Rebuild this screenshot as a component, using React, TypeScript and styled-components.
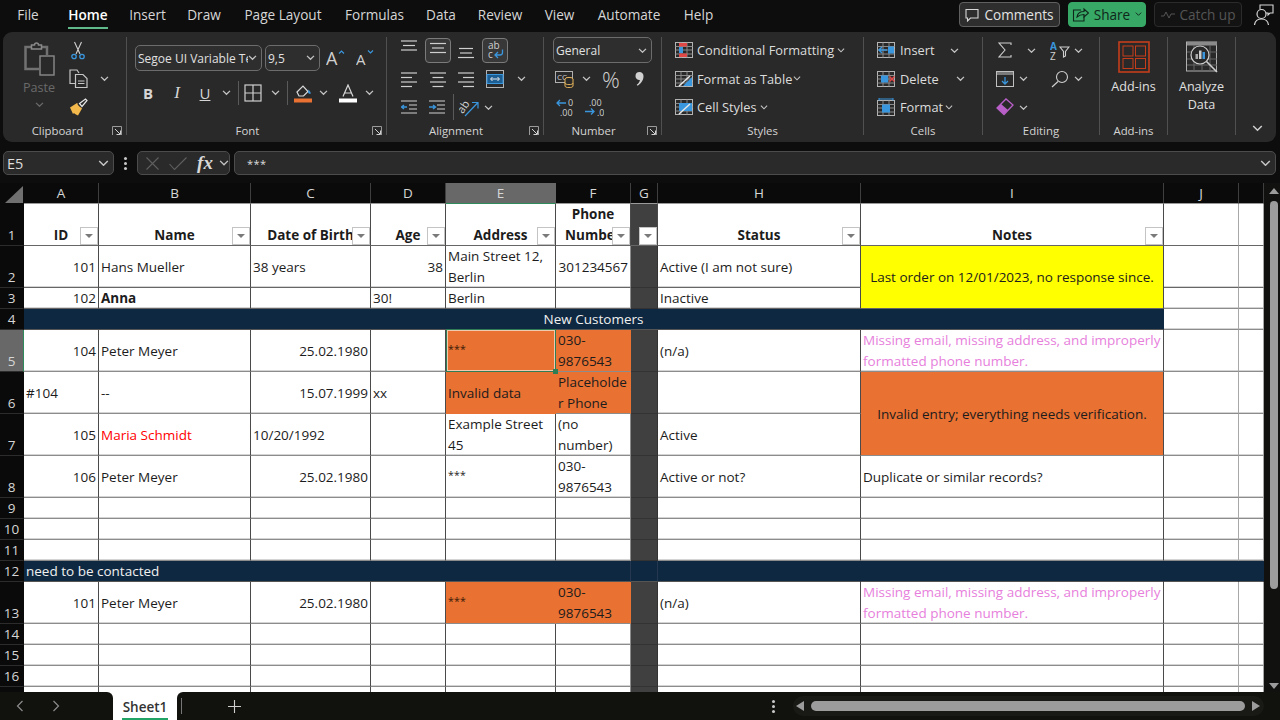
import React from "react";
import styled, { createGlobalStyle } from "styled-components";

const UI_FONT = `"Open Sans", "Noto Sans", "Liberation Sans", sans-serif`;
const GREY = "#c6c6c6";
const BLUE = "#3a96dd";
const ORANGE = "#e97132";
const NAVY = "#0e2841";

const GlobalStyle = createGlobalStyle`
  html, body { margin: 0; padding: 0; background: #0d0d0d; }
  * { box-sizing: border-box; }
`;

const Page = styled.div`
  width: 1280px;
  height: 720px;
  display: flex;
  flex-direction: column;
  overflow: hidden;
  background: #0d0d0d;
  font-family: ${UI_FONT};
`;

/* ---------- top menu ---------- */
const MenuBar = styled.div`
  height: 32px;
  flex: none;
  display: flex;
  align-items: flex-start;
  padding-left: 17px;
`;
const MenuTabs = styled.div`
  display: flex;
  gap: 22px;
`;
const MenuTab = styled.div<{ $w: number; $active?: boolean; $after?: number }>`
  width: ${(p) => p.$w}px;
  height: 29px;
  margin-right: ${(p) => p.$after || 0}px;
  display: flex;
  justify-content: center;
  padding-top: 5px;
  white-space: nowrap;
  font-size: 13.6px;
  line-height: 20px;
  font-weight: ${(p) => (p.$active ? 600 : 400)};
  color: ${(p) => (p.$active ? "#fff" : "#d6d6d6")};
  border-bottom: ${(p) => (p.$active ? "2.5px solid #5fb98a" : "none")};
`;
const MenuActions = styled.div`
  margin-left: auto;
  padding: 2px 3px 0 0;
  display: flex;
  align-items: center;
`;
const ActionButton = styled.div<{ $w: number; $kind: "plain" | "share" | "off"; $after: number }>`
  width: ${(p) => p.$w}px;
  height: 25px;
  margin-right: ${(p) => p.$after}px;
  display: flex;
  align-items: center;
  justify-content: center;
  gap: 5px;
  border-radius: 4px;
  font-size: 13.6px;
  white-space: nowrap;
  background: ${(p) => (p.$kind === "share" ? "#37a866" : p.$kind === "plain" ? "#2e2e2e" : "#131313")};
  color: ${(p) => (p.$kind === "share" ? "#10261a" : p.$kind === "plain" ? "#e2e2e2" : "#555")};
  border: 1px solid ${(p) => (p.$kind === "share" ? "#37a866" : p.$kind === "plain" ? "#606060" : "#2b2b2b")};
`;

/* ---------- ribbon ---------- */
const Ribbon = styled.div`
  height: 110px;
  flex: none;
  margin: 0 4px 0 3px;
  padding: 4px 0 2px;
  display: flex;
  border-radius: 9px;
  background: #292929;
  color: #d8d8d8;
  font-size: 12.6px;
`;
const Group = styled.div<{ $w: number }>`
  width: ${(p) => p.$w}px;
  flex: none;
  position: relative;
  display: flex;
  flex-direction: column;
`;
const GroupBody = styled.div<{ $pad?: number }>`
  height: 86px;
  padding-left: ${(p) => p.$pad || 0}px;
`;
const GroupLabel = styled.div<{ $inset?: number }>`
  height: 18px;
  padding-right: ${(p) => p.$inset || 0}px;
  text-align: center;
  font-size: 11.4px;
  line-height: 18px;
  color: #d4d4d4;
`;
const Launcher = styled.div`
  position: absolute;
  right: 4px;
  bottom: 4px;
  width: 10px;
  height: 10px;
`;
const GroupSep = styled.div`
  width: 1px;
  flex: none;
  margin: 1px 0 5px;
  background: #505050;
`;
const Row = styled.div<{ $h?: number; $pad?: number }>`
  height: ${(p) => p.$h || 28.6}px;
  padding-left: ${(p) => p.$pad || 0}px;
  display: flex;
  align-items: center;
`;
const Slot = styled.div<{ $w: number }>`
  width: ${(p) => p.$w}px;
  flex: none;
  height: 100%;
  display: flex;
  align-items: center;
  justify-content: center;
`;
const ToggledBox = styled.div`
  width: 26px;
  height: 25px;
  flex: none;
  display: flex;
  align-items: center;
  justify-content: center;
  border-radius: 4px;
  border: 1px solid #7b7b7b;
  background: #383838;
`;
const VSep = styled.div<{ $h: number }>`
  width: 1px;
  height: ${(p) => p.$h}px;
  flex: none;
  background: #5a5a5a;
`;
const SelectBox = styled.div<{ $w: number; $after?: number }>`
  width: ${(p) => p.$w}px;
  height: 26px;
  flex: none;
  margin-right: ${(p) => p.$after || 0}px;
  padding: 0 4px 0 2px;
  display: flex;
  align-items: center;
  justify-content: space-between;
  border: 1px solid #6c6c6c;
  border-radius: 5px;
  background: #2e2e2e;
  font-size: 12px;
  color: #e0e0e0;
  white-space: nowrap;
`;
const SelectText = styled.span`
  overflow: hidden;
  flex: 1;
`;
const PasteCol = styled.div`
  width: 63px;
  padding: 6px 0 0 9px;
  display: flex;
  flex-direction: column;
  align-items: center;
  flex: none;
`;
const PasteText = styled.div`
  margin: 4px 0 6px;
  font-size: 12.6px;
  line-height: 16px;
  color: #6a6a6a;
`;
const ClipboardBody = styled(GroupBody)`
  display: flex;
`;
const StyleLabel = styled.span<{ $w: number; $gap?: number }>`
  margin-left: ${(p) => p.$gap || 5}px;
  white-space: nowrap;
  font-size: 12.8px;
  width: ${(p) => p.$w}px;
  flex: none;
  color: #dcdcdc;
`;
const BigButton = styled.div`
  padding-top: 5px;
  display: flex;
  flex-direction: column;
  align-items: center;
  text-align: center;
  font-size: 12.6px;
  line-height: 18px;
  color: #e0e0e0;
  white-space: pre-line;
`;
const BigCaption = styled.div`
  margin-top: 5px;
`;
const RibbonEnd = styled.div`
  flex: 1;
  display: flex;
  align-items: flex-end;
  justify-content: center;
  padding: 0 0 8px 3px;
`;

/* ---------- formula bar ---------- */
const FormulaBar = styled.div`
  height: 24px;
  flex: none;
  margin: 9px 4px 0 3px;
  display: flex;
  align-items: stretch;
`;
const FormulaBox = styled.div<{ $w?: number; $after?: number }>`
  ${(p) => (p.$w ? `width: ${p.$w}px; flex: none;` : "flex: 1;")}
  margin-right: ${(p) => p.$after || 0}px;
  display: flex;
  align-items: center;
  border: 1px solid #4c4c4c;
  border-radius: 5px;
  background: #2a2a2a;
  color: #dedede;
  font-size: 14.5px;
`;
const NameText = styled.span`
  flex: 1;
  padding-left: 3px;
`;
const FormulaText = styled.span`
  flex: 1;
  padding-left: 12px;
  letter-spacing: 0.5px;
  font-size: 11px;
`;
const DotsGap = styled.div`
  width: 23px;
  flex: none;
  display: flex;
  align-items: center;
  justify-content: center;
`;
const FxSlot = styled(Slot)`
  font-family: "Liberation Serif", serif;
  font-style: italic;
  font-weight: 700;
  font-size: 19px;
  color: #d8d8d8;
`;

/* ---------- sheet ---------- */
const columns = [24, 75, 152, 120, 75, 110, 75, 27, 203, 303, 75, 25];
const rowHeights = [42, 42, 21, 21, 42, 42, 42, 42, 21, 21, 21, 21, 42, 21, 21, 21, 21];

const SheetArea = styled.div`
  flex: 1;
  min-height: 0;
  margin-top: 8px;
  display: flex;
  overflow: hidden;
`;
const SheetGrid = styled.div`
  width: 1264px;
  flex: none;
  display: grid;
  grid-template-columns: ${columns.map((c) => `${c}px`).join(" ")};
  grid-template-rows: 21px ${rowHeights.map((h) => `${h}px`).join(" ")};
  font-size: 13.5px;
  color: #1c1c1c;
`;
const Corner = styled.div`
  background: #0a0a0a;
  position: relative;
  &::after {
    content: "";
    position: absolute;
    left: 5px;
    right: 1px;
    top: 3px;
    bottom: 1px;
    background: #707070;
    clip-path: polygon(100% 0, 100% 100%, 0 100%);
  }
`;
const ColHead = styled.div<{ $sel?: boolean }>`
  display: flex;
  align-items: center;
  justify-content: center;
  font-size: 13.5px;
  color: #d6d6d6;
  background: ${(p) => (p.$sel ? "#686868" : "#0a0a0a")};
  border-right: 1px solid ${(p) => (p.$sel ? "#686868" : "#3f3f3f")};
  border-bottom: 1px solid ${(p) => (p.$sel ? "#2f8a5c" : "#9a9a9a")};
`;
const RowHead = styled.div<{ $sel?: boolean }>`
  display: flex;
  align-items: flex-end;
  justify-content: center;
  font-size: 13.5px;
  line-height: 20px;
  color: #d6d6d6;
  background: ${(p) => (p.$sel ? "#686868" : "#0a0a0a")};
  border-right: 1px solid ${(p) => (p.$sel ? "#2f8a5c" : "#0a0a0a")};
  border-bottom: 1px solid #2c2c2c;
`;

type CellProps = {
  $span?: number;
  $rows?: number;
  $align?: "left" | "right" | "center";
  $bg?: string;
  $color?: string;
  $bold?: boolean;
  $v?: string;
  $h?: string;
  $head?: boolean;
};
const Cell = styled.div<CellProps>`
  grid-column: span ${(p) => p.$span || 1};
  grid-row: span ${(p) => p.$rows || 1};
  position: relative;
  overflow: hidden;
  display: flex;
  align-items: ${(p) => (p.$head ? "flex-end" : "center")};
  justify-content: ${(p) =>
    p.$align === "right" ? "flex-end" : p.$align === "center" ? "center" : "flex-start"};
  padding: ${(p) => (p.$head ? 0 : 1)}px 2px 0 2px;
  white-space: pre-line;
  line-height: 21px;
  text-align: ${(p) => p.$align || "left"};
  font-weight: ${(p) => (p.$bold ? 700 : 400)};
  color: ${(p) => p.$color || "#1c1c1c"};
  background: ${(p) => p.$bg || "#fff"};
  border-right: 1px solid ${(p) => p.$v || "#4a4a4a"};
  border-bottom: 1px solid ${(p) => p.$h || "#8c8c8c"};
  box-shadow: ${(p) => (p.$bg || p.$head ? "none" : "inset 0 -1px 0 #d4d4d4")};
`;
const HeadText = styled.span`
  position: relative;
  top: 1px;
`;
const Stars = styled.span`
  font-size: 10.5px;
  letter-spacing: 0.2px;
  position: relative;
  top: -2px;
`;
const FilterButton = styled.div`
  position: absolute;
  right: 0;
  bottom: 0;
  width: 18px;
  height: 18px;
  display: flex;
  align-items: center;
  justify-content: center;
  background: #fff;
  border: 1px solid #c4c4c4;
  &::after {
    content: "";
    border-left: 4px solid transparent;
    border-right: 4px solid transparent;
    border-top: 4px solid #7a7a7a;
  }
`;
const Selection = styled.div`
  position: absolute;
  inset: -1px -1px -1px 0;
  border: 1.5px solid #2f7d55;
  box-shadow: inset 0 0 0 1px #f0c9ae;
`;
const SelectionHandle = styled.div`
  position: absolute;
  right: -3px;
  bottom: -3px;
  width: 5px;
  height: 5px;
  background: #2f7d55;
  z-index: 2;
`;
const EditedCell = styled(Cell)`
  overflow: visible;
  z-index: 1;
`;

const VScroll = styled.div`
  flex: 1;
  display: flex;
  flex-direction: column;
  align-items: center;
  padding: 5px 0 3px 4px;
  background: #111210;
`;
const Thumb = styled.div`
  width: 8px;
  height: 388px;
  margin-top: 7px;
  border-radius: 4px;
  background: #9c9c9c;
`;
const ArrowUp = styled.div`
  border-left: 5px solid transparent;
  border-right: 5px solid transparent;
  border-bottom: 6px solid #9c9c9c;
`;
const ArrowDown = styled.div`
  margin-top: auto;
  border-left: 5px solid transparent;
  border-right: 5px solid transparent;
  border-top: 6px solid #9c9c9c;
`;

/* ---------- bottom bar ---------- */
const BottomBar = styled.div`
  height: 28px;
  flex: none;
  display: flex;
  background: #fff;
`;
const NavZone = styled.div`
  width: 113px;
  flex: none;
  display: flex;
  align-items: center;
  padding-left: 2px;
  background: #11120e;
  border-top-right-radius: 6px;
`;
const SheetTab = styled.div`
  width: 64px;
  flex: none;
  display: flex;
  flex-direction: column;
  align-items: center;
  padding-top: 4px;
  font-size: 13.5px;
  line-height: 22px;
  font-weight: 600;
  color: #333;
  background: #fff;
`;
const TabUnderline = styled.div`
  width: 46px;
  height: 2px;
  background: #21a366;
`;
const RightZone = styled.div`
  flex: 1;
  display: flex;
  align-items: center;
  padding-left: 4px;
  background: #11120e;
  border-top-left-radius: 6px;
`;
const ThinBar = styled.div`
  width: 1px;
  height: 16px;
  background: #777;
  flex: none;
`;
const HTrack = styled.div`
  width: 471px;
  height: 20px;
  margin-left: 10px;
  flex: none;
  display: flex;
  align-items: center;
  border-radius: 10px;
  background: #191a16;
`;
const HThumb = styled.div`
  width: 434px;
  height: 10px;
  margin-left: 4px;
  flex: none;
  border-radius: 5px;
  background: #9c9c9c;
`;
const TrackEnd = styled.div`
  margin-left: auto;
  margin-right: 4px;
`;
const Dots = styled.div`
  width: 3px;
  height: 3px;
  flex: none;
  border-radius: 50%;
  color: #c8c8c8;
  background: currentColor;
  box-shadow: 0 -5px 0 currentColor, 0 5px 0 currentColor;
`;

/* ---------- icons ---------- */
const Ic = ({ w, h, children }: { w: number; h: number; children: React.ReactNode }) => (
  <svg width={w} height={h} viewBox={`0 0 ${w} ${h}`} fill="none" style={{ display: "block", flex: "none" }}>
    {children}
  </svg>
);

const Chevron = ({ color = GREY, size = 9 }: { color?: string; size?: number }) => (
  <svg width={size} height={size * 0.6} viewBox="0 0 9 5.4" fill="none" style={{ display: "block", flex: "none" }}>
    <path d="M1 .8l3.5 3.5L8 .8" stroke={color} strokeWidth="1.2" />
  </svg>
);

const LauncherIcon = () => (
  <Launcher>
    <Ic w={10} h={10}>
      <path d="M.5 9V.5H9.5V9" stroke="#9a9a9a" />
      <path d="M3 3l5 5M8.5 4.5v4h-4" stroke="#d0d0d0" />
    </Ic>
  </Launcher>
);

const PasteIcon = () => (
  <Ic w={31} h={34}>
    <path d="M15 27H1.5V5H7M17 5h6v8" stroke="#717171" strokeWidth="2.5" />
    <path d="M7.5 6V3h3a2 2 0 0 1 4 0h3v4h-10z" stroke="#8a8a8a" strokeWidth="1.5" />
    <rect x="16" y="14" width="14" height="19" stroke="#8a8a8a" strokeWidth="1.4" fill="#292929" />
  </Ic>
);
const ScissorsIcon = () => (
  <Ic w={14} h={19}>
    <path d="M3.5 1l5.500 12M10.500 1L5 13" stroke="#cfcfcf" strokeWidth="1.1" />
    <circle cx="3" cy="15.5" r="2.2" stroke={BLUE} strokeWidth="1.3" />
    <circle cx="11" cy="15.5" r="2.2" stroke={BLUE} strokeWidth="1.3" />
  </Ic>
);
const CopyIcon = () => (
  <Ic w={19} h={19}>
    <path d="M8 14.5H1V1h7l2 3" stroke={GREY} strokeWidth="1.2" />
    <path d="M6.5 5.5H14l4 4v9H6.5z" stroke={GREY} strokeWidth="1.2" fill="#292929" />
    <path d="M9 12h6.5M9 14.5h6.5" stroke={GREY} />
  </Ic>
);
const BrushIcon = () => (
  <Ic w={19} h={18}>
    <path d="M1 9.5L8 5l5 5.500-4 7-3-1.500-1-1-1 1z" fill="#f2b84b" />
    <path d="M9 6l3 3" stroke="#292929" strokeWidth="1.5" />
    <path d="M10.5 5.5l6-4.500 1.500 1.500-5 6z" stroke="#e6e6e6" strokeWidth="1.2" />
  </Ic>
);
const GrowA = ({ up }: { up: boolean }) => (
  <Ic w={20} h={18}>
    <text x="0" y="16" fontFamily={UI_FONT} fontSize={up ? 18 : 15} fill="#d0d0d0">A</text>
    <path d={up ? "M13 4.5l2.500-2.500L18 4.5" : "M12 1.5l2.500 2.500L17 1.5"} stroke={BLUE} strokeWidth="1.2" />
  </Ic>
);
const LetterIcon = styled.span<{ $b?: boolean; $i?: boolean; $u?: boolean }>`
  font-family: ${(p) => (p.$i ? `"Liberation Serif", serif` : UI_FONT)};
  font-size: ${(p) => (p.$i ? 17 : 15)}px;
  color: #d6d6d6;
  font-weight: ${(p) => (p.$b ? 700 : 400)};
  font-style: ${(p) => (p.$i ? "italic" : "normal")};
  text-decoration: ${(p) => (p.$u ? "underline" : "none")};
`;
const BordersIcon = () => (
  <Ic w={18} h={18}>
    <rect x="1" y="1" width="16" height="16" stroke="#cfcfcf" strokeWidth="1.2" />
    <path d="M9 1v16M1 9h16" stroke="#cfcfcf" strokeWidth="1.2" />
  </Ic>
);
const FillIcon = () => (
  <Ic w={19} h={19}>
    <path d="M3 8l6-6 5 5.500-4.500 4.500H5z" stroke="#d8d8d8" strokeWidth="1.2" />
    <path d="M14.5 5.5c1.500 1.500 2.500 3 2 4.500-1.500 0-2.500-1-2.500-2z" fill={BLUE} />
    <rect x="0" y="14.5" width="18" height="4" fill={ORANGE} />
  </Ic>
);
const FontColorIcon = () => (
  <Ic w={18} h={19}>
    <path d="M4 12.5L9 1l5 11.500M5.500 9h7" stroke="#d8d8d8" strokeWidth="1.2" />
    <rect x="0" y="14.5" width="18" height="4" fill="#fff" />
  </Ic>
);
const LinesIcon = ({ rows, w = 16, h = 28 }: { rows: [number, number, number][]; w?: number; h?: number }) => (
  <Ic w={w} h={h}>
    {rows.map(([x1, x2, y], i) => (
      <path key={i} d={`M${x1} ${y}H${x2}`} stroke="#cfcfcf" strokeWidth="1.2" />
    ))}
  </Ic>
);
const WrapIcon = () => (
  <Ic w={20} h={22}>
    <text x="3" y="9.5" fontFamily={UI_FONT} fontSize="10" fill="#d0d0d0">ab</text>
    <text x="3" y="19" fontFamily={UI_FONT} fontSize="10" fill="#d0d0d0">c</text>
    <path d="M17.5 10.5v3a2.500 2.500 0 0 1-2.500 2.500H10M13 13l-3 3 3 3" stroke={BLUE} strokeWidth="1.3" />
  </Ic>
);
const MergeIcon = () => (
  <Ic w={18} h={18}>
    <rect x=".5" y=".5" width="17" height="17" stroke="#b4b4b4" />
    <rect x="1" y="4.5" width="16" height="9" fill="#1c5d92" stroke={BLUE} />
    <path d="M5 9h8M6.500 7L4.500 9l2 2M11.500 7l2 2-2 2" stroke="#eaeaea" />
  </Ic>
);
const IndentIcon = ({ flip }: { flip?: boolean }) => (
  <Ic w={16} h={16}>
    <path d="M0 2h16M8 6h8M8 10h8M0 14h16" stroke="#cfcfcf" strokeWidth="1.2" />
    <path d={flip ? "M0 8h6M4 6l2.500 2L4 10" : "M6 8H.5M3 6L.5 8 3 10"} stroke={BLUE} strokeWidth="1.4" />
  </Ic>
);
const OrientIcon = () => (
  <Ic w={20} h={20}>
    <text x="0" y="14" fontFamily={UI_FONT} fontSize="11" fill="#d0d0d0" transform="rotate(-55 5 12)">ab</text>
    <path d="M6 19L18.5 6M13 5.500h6v6" stroke={BLUE} strokeWidth="1.2" />
  </Ic>
);
const CurrencyIcon = () => (
  <Ic w={20} h={18}>
    <rect x=".5" y="1.5" width="17" height="11" stroke="#b0b0b0" />
    <text x="2" y="10" fontFamily={UI_FONT} fontSize="8" fill="#d0d0d0">CC</text>
    <ellipse cx="14" cy="9" rx="4" ry="1.6" fill="#292929" stroke="#e8b55a" />
    <path d="M10 9v7c0 1 1.800 1.600 4 1.600s4-.6 4-1.600V9M10 13c0 1 1.800 1.600 4 1.600s4-.6 4-1.600" stroke="#e8b55a" fill="#292929" />
  </Ic>
);
const PercentText = styled.span`
  font-size: 22px;
  color: #d0d0d0;
  font-weight: 300;
`;
const CommaIcon = () => (
  <Ic w={9} h={14}>
    <path d="M4.500 0a4 4 0 0 1 4 4.200c0 4-2.700 7.500-6 9.500l-.8-1c2-1.500 3-3.200 3.200-4.800A3.800 3.800 0 0 1 .5 4a4 4 0 0 1 4-4z" fill="#d0d0d0" />
  </Ic>
);
const DecimalIcon = ({ more }: { more?: boolean }) => (
  <Ic w={19} h={19}>
    {more ? (
      <>
        <text x="4" y="8" fontFamily={UI_FONT} fontSize="9" fill="#d0d0d0">.00</text>
        <text x="12" y="17.5" fontFamily={UI_FONT} fontSize="9" fill="#d0d0d0">.0</text>
        <path d="M0 13.5h9M6 10.500l3 3-3 3" stroke={BLUE} strokeWidth="1.3" />
      </>
    ) : (
      <>
        <text x="12" y="8" fontFamily={UI_FONT} fontSize="9" fill="#d0d0d0">0</text>
        <text x="4" y="17.5" fontFamily={UI_FONT} fontSize="9" fill="#d0d0d0">.00</text>
        <path d="M10 5H1M4 2L1 5l3 3" stroke={BLUE} strokeWidth="1.3" />
      </>
    )}
  </Ic>
);
const GridBase = () => (
  <>
    <rect x=".5" y=".5" width="17" height="15" stroke="#b4b4b4" />
    <path d="M.5 4.500h17M.5 8h17M.5 12h17M6 .5v15M12 .5v15" stroke="#8a8a8a" />
  </>
);
const CondIcon = () => (
  <Ic w={18} h={16}>
    <GridBase />
    <rect x="4" y="1" width="8" height="3.500" fill="#e04848" />
    <rect x="4" y="5" width="4" height="6" fill={BLUE} />
    <rect x="4" y="11.500" width="8" height="3.500" fill="#e04848" />
  </Ic>
);
const TableIcon = () => (
  <Ic w={18} h={16}>
    <GridBase />
    <path d="M8 15l9-9v9z" fill={BLUE} />
    <path d="M4 15L15 5" stroke="#e6e6e6" strokeWidth="1.5" />
  </Ic>
);
const CellStyleIcon = () => (
  <Ic w={18} h={16}>
    <GridBase />
    <rect x="4" y="4" width="13" height="8" fill={BLUE} />
    <path d="M4 15L15 5" stroke="#e6e6e6" strokeWidth="1.5" />
  </Ic>
);
const InsertIcon = () => (
  <Ic w={18} h={16}>
    <GridBase />
    <rect x="11" y="4.500" width="6" height="7" fill={BLUE} />
    <path d="M10 8H2M5 5L2 8l3 3" stroke={BLUE} strokeWidth="1.5" />
  </Ic>
);
const DeleteIcon = () => (
  <Ic w={18} h={16}>
    <GridBase />
    <rect x="4" y="4.500" width="7" height="7" fill={BLUE} />
    <path d="M12.500 5.500l5 5M17.500 5.500l-5 5" stroke="#e04848" strokeWidth="1.5" />
  </Ic>
);
const FormatIcon = () => (
  <Ic w={18} h={18}>
    <g transform="translate(0 2)">
      <GridBase />
      <rect x="5" y="4.500" width="8" height="8" fill={BLUE} />
    </g>
    <path d="M2 1h14M2 0v2.500M16 0v2.500" stroke={BLUE} />
  </Ic>
);
const SigmaIcon = () => (
  <Ic w={14} h={16}>
    <path d="M13 3V1H1l6 7-6 7h12v-2" stroke="#cfcfcf" strokeWidth="1.1" />
  </Ic>
);
const SortIcon = () => (
  <Ic w={20} h={19}>
    <text x="0" y="8.500" fontFamily={UI_FONT} fontWeight="700" fontSize="10" fill={BLUE}>A</text>
    <text x="0" y="18.500" fontFamily={UI_FONT} fontSize="10" fill="#d0d0d0">Z</text>
    <path d="M10 6h9l-3.500 4.500V15l-2 1v-5.500z" stroke="#d0d0d0" strokeWidth="1.1" />
  </Ic>
);
const FillDownIcon = () => (
  <Ic w={18} h={16}>
    <rect x=".5" y=".5" width="17" height="15" stroke="#c0c0c0" />
    <rect x="1" y="1" width="16" height="3" fill="#7a7a7a" />
    <path d="M9 6v7M6 10l3 3 3-3" stroke={BLUE} strokeWidth="1.3" />
  </Ic>
);
const SearchIcon = () => (
  <Ic w={18} h={18}>
    <circle cx="11" cy="7" r="5.500" stroke="#cfcfcf" strokeWidth="1.1" />
    <path d="M7 11.500L1 17" stroke="#cfcfcf" strokeWidth="1.2" />
  </Ic>
);
const EraserIcon = () => (
  <Ic w={18} h={18}>
    <path d="M1 10l9-9 7 6-9 9.500z" stroke="#b95fc8" strokeWidth="1.3" />
    <path d="M1 10l4-4 7 6-4 4.500z" fill="#b95fc8" />
  </Ic>
);
const AddInsIcon = () => (
  <Ic w={32} h={32}>
    <rect x="1" y="1" width="30" height="30" stroke="#c43e1c" strokeWidth="1.6" />
    <rect x="5" y="5" width="10" height="10" stroke="#c43e1c" />
    <rect x="17.500" y="5" width="10" height="10" stroke="#c43e1c" />
    <rect x="5" y="17.500" width="10" height="10" stroke="#c43e1c" />
    <rect x="17.500" y="17.500" width="10" height="10" stroke="#c43e1c" />
  </Ic>
);
const AnalyzeIcon = () => (
  <Ic w={32} h={32}>
    <rect x=".5" y="1" width="30" height="29" stroke="#b0b0b0" />
    <rect x="1" y="1" width="30" height="3.500" fill="#8a8a8a" />
    <path d="M1 11h30M1 18h30M1 24h30M8 4v26M16 4v26M24 4v26" stroke="#666" />
    <circle cx="14" cy="14" r="9" fill="#292929" stroke="#cfcfcf" strokeWidth="1.2" />
    <rect x="9.500" y="13" width="2.500" height="5" fill="#aaa" />
    <rect x="13" y="9.500" width="2.500" height="8.500" fill="#ccc" />
    <rect x="16.500" y="11" width="2.500" height="7" fill={BLUE} />
    <path d="M20.500 20.500L31 31" stroke="#cfcfcf" strokeWidth="1.6" />
  </Ic>
);
const CommentIcon = () => (
  <Ic w={14} h={14}>
    <path d="M1 1.500h12v8.500H5.500L2.500 13v-3H1z" stroke="#d8d8d8" strokeWidth="1.1" />
  </Ic>
);
const ShareIcon = () => (
  <Ic w={17} h={15}>
    <path d="M9 3H1.500v11H12V9.500" stroke="#10261a" strokeWidth="1.1" />
    <path d="M5 10c.5-3.500 3-5.500 7-5.500V2l4.500 4-4.500 4V7.500c-3 0-5 .8-7 2.500z" stroke="#10261a" strokeWidth="1.1" />
  </Ic>
);
const PulseIcon = () => (
  <Ic w={14} h={10}>
    <path d="M0 6h3l2-4 3 6 2-4h4" stroke="#555" strokeWidth="1" />
  </Ic>
);
const PersonIcon = () => (
  <Ic w={20} h={22}>
    <circle cx="7.500" cy="10" r="4.500" stroke="#d8d8d8" strokeWidth="1.2" />
    <path d="M.5 21c.5-4 3-6 7-6s6.500 2 7 6" stroke="#d8d8d8" strokeWidth="1.2" />
    <path d="M6 5V1h13v8h-3l-2 2V9h-2" stroke="#d8d8d8" strokeWidth="1.1" />
  </Ic>
);
const BigX = () => (
  <Ic w={13} h={13}>
    <path d="M.5.5l12 12M12.500.5l-12 12" stroke="#5f5f5f" strokeWidth="1.1" />
  </Ic>
);
const BigCheck = () => (
  <Ic w={18} h={13}>
    <path d="M.5 7l5 5.500L17.500.5" stroke="#5f5f5f" strokeWidth="1.1" />
  </Ic>
);
const SideChevron = ({ left }: { left?: boolean }) => (
  <Ic w={8} h={12}>
    <path d={left ? "M6.500 1L1.500 6l5 5" : "M1.500 1l5 5-5 5"} stroke="#8c8c8c" strokeWidth="1.2" />
  </Ic>
);
const PlusIcon = () => (
  <Ic w={13} h={13}>
    <path d="M6.500 0v13M0 6.500h13" stroke="#cfcfcf" strokeWidth="1.1" />
  </Ic>
);
const Tri = ({ left }: { left?: boolean }) => (
  <Ic w={8} h={10}>
    <path d={left ? "M8 0v10L0 5z" : "M0 0v10l8-5z"} fill="#9c9c9c" />
  </Ic>
);

/* ---------- data ---------- */
const tabs = [
  { label: "Home", w: 40 },
  { label: "Insert", w: 35 },
  { label: "Draw", w: 34 },
  { label: "Page Layout", w: 80 },
  { label: "Formulas", w: 59 },
  { label: "Data", w: 30 },
  { label: "Review", w: 44 },
  { label: "View", w: 31 },
  { label: "Automate", w: 64 },
  { label: "Help", w: 31 },
];

const heads = ["A", "B", "C", "D", "E", "F", "G", "H", "I", "J", ""];
const DARK = "#404040";
const PINK = "#e77fdc";
const missing = "Missing email, missing address, and improperly\nformatted phone number.";

type Def = CellProps & { t?: string; sel?: boolean };

const soft = { $v: "#a8a8a8" };
const g = { $bg: DARK, $v: "#333", $h: "#333" };
const tail = (): Def[] => [{ ...soft }, { ...soft }];
const emptyRow = (): Def[] => [{}, {}, {}, {}, {}, { $v: "#8c8c8c" }, { ...g }, {}, {}, ...tail()];
const dark = "#666";

const sheet: Def[][] = [
  [
    { t: "101", $align: "right", $h: dark },
    { t: "Hans Mueller", $h: dark },
    { t: "38 years", $h: dark },
    { t: "38", $align: "right", $h: dark },
    { t: "Main Street 12,\nBerlin", $h: dark },
    { t: "301234567", $align: "right", $h: dark, $v: "#8c8c8c" },
    { ...g },
    { t: "Active (I am not sure)", $h: dark },
    { t: "Last order on 12/01/2023, no response since.", $align: "center", $rows: 2, $bg: "#ffff00", $h: dark },
    { ...soft, $h: dark },
    { ...soft, $h: dark },
  ],
  [
    { t: "102", $align: "right", $h: dark },
    { t: "Anna", $bold: true, $h: dark },
    { $h: dark },
    { t: "30!", $h: dark },
    { t: "Berlin", $h: dark },
    { $h: dark, $v: "#8c8c8c" },
    { ...g },
    { t: "Inactive", $h: dark },
    ...tail(),
  ],
  [
    { t: "New Customers", $span: 9, $align: "center", $bg: NAVY, $color: "#f0f0f0", $v: NAVY, $h: "#555" },
    ...tail(),
  ],
  [
    { t: "104", $align: "right" },
    { t: "Peter Meyer" },
    { t: "25.02.1980", $align: "right" },
    {},
    { t: "***", $bg: ORANGE, sel: true, $color: "#3a1a08" },
    { t: "030-\n9876543", $bg: ORANGE, $v: ORANGE },
    { ...g },
    { t: "(n/a)" },
    { t: missing, $color: PINK },
    ...tail(),
  ],
  [
    { t: "#104" },
    { t: "--" },
    { t: "15.07.1999", $align: "right" },
    { t: "xx" },
    { t: "Invalid data", $bg: ORANGE, $v: ORANGE, $h: ORANGE },
    { t: "Placeholde\nr Phone", $bg: ORANGE, $v: ORANGE },
    { ...g },
    {},
    { t: "Invalid entry; everything needs verification.", $align: "center", $rows: 2, $bg: ORANGE },
    ...tail(),
  ],
  [
    { t: "105", $align: "right" },
    { t: "Maria Schmidt", $color: "#ff0000" },
    { t: "10/20/1992" },
    {},
    { t: "Example Street\n45" },
    { t: "(no\nnumber)", $v: "#8c8c8c" },
    { ...g },
    { t: "Active" },
    ...tail(),
  ],
  [
    { t: "106", $align: "right" },
    { t: "Peter Meyer" },
    { t: "25.02.1980", $align: "right" },
    {},
    { t: "***" },
    { t: "030-\n9876543", $v: "#8c8c8c" },
    { ...g },
    { t: "Active or not?" },
    { t: "Duplicate or similar records?" },
    ...tail(),
  ],
  emptyRow(),
  emptyRow(),
  emptyRow(),
  [
    { t: "need to be contacted", $span: 6, $bg: NAVY, $color: "#f0f0f0", $v: "#24394f", $h: "#555" },
    { $bg: NAVY, $v: "#24394f", $h: "#555" },
    { $bg: NAVY, $v: NAVY, $h: "#555" },
    { $bg: NAVY, $v: NAVY, $h: "#555" },
    { $bg: NAVY, $v: NAVY, $h: "#555" },
    { $bg: NAVY, $h: "#555", $v: NAVY },
  ],
  [
    { t: "101", $align: "right" },
    { t: "Peter Meyer" },
    { t: "25.02.1980", $align: "right" },
    {},
    { t: "***", $bg: ORANGE, $color: "#3a1a08", $v: ORANGE },
    { t: "030-\n9876543", $bg: ORANGE, $v: ORANGE },
    { ...g },
    { t: "(n/a)" },
    { t: missing, $color: PINK },
    ...tail(),
  ],
  emptyRow(),
  emptyRow(),
  emptyRow(),
  emptyRow(),
];

const headerCells = [
  { t: "ID", filter: true },
  { t: "Name", filter: true },
  { t: "Date of Birth", filter: true },
  { t: "Age", filter: true },
  { t: "Address", filter: true },
  { t: "Phone\nNumber", filter: true },
  { t: "", filter: true, dark: true },
  { t: "Status", filter: true },
  { t: "Notes", filter: true },
  { t: "" },
  { t: "" },
];

type Line = [number, number, number];
const TOP: Line[] = [[0, 16, 5], [2, 14, 9.5], [0, 16, 14]];
const MID: Line[] = [[0, 16, 7.5], [2, 14, 12], [0, 16, 16.5]];
const BOT: Line[] = [[1, 15, 12.5], [2, 14, 17], [0, 16, 21.5]];
const LEFT: Line[] = [[0, 16, 8], [0, 11, 12.5], [0, 16, 17], [0, 11, 21.5]];
const CENTER: Line[] = [[0, 16, 8], [2.5, 13.5, 12.5], [0, 16, 17], [2.5, 13.5, 21.5]];
const RIGHT: Line[] = [[0, 16, 8], [5, 16, 12.5], [0, 16, 17], [5, 16, 21.5]];

const App = (): JSX.Element => {
  return (
    <Page>
      <GlobalStyle />
      <MenuBar>
        <MenuTab $w={22} $after={29}>File</MenuTab>
        <MenuTabs>
          {tabs.map((tab) => (
            <MenuTab key={tab.label} $w={tab.w} $active={tab.label === "Home"}>
              {tab.label}
            </MenuTab>
          ))}
        </MenuTabs>
        <MenuActions>
          <ActionButton $w={101} $kind="plain" $after={8}>
            <CommentIcon />
            Comments
          </ActionButton>
          <ActionButton $w={78} $kind="share" $after={8}>
            <ShareIcon />
            Share
            <Chevron color="#10261a" size={7} />
          </ActionButton>
          <ActionButton $w={88} $kind="off" $after={9}>
            <PulseIcon />
            Catch up
          </ActionButton>
          <Slot $w={26}>
            <PersonIcon />
          </Slot>
        </MenuActions>
      </MenuBar>

      <Ribbon>
        <Group $w={123}>
          <ClipboardBody>
            <PasteCol>
              <PasteIcon />
              <PasteText>Paste</PasteText>
              <Chevron color="#6a6a6a" />
            </PasteCol>
            <div>
              <Row><Slot $w={24}><ScissorsIcon /></Slot></Row>
              <Row><Slot $w={24}><CopyIcon /></Slot><Slot $w={28}><Chevron /></Slot></Row>
              <Row><Slot $w={24}><BrushIcon /></Slot></Row>
            </div>
          </ClipboardBody>
          <GroupLabel $inset={14}>Clipboard</GroupLabel>
          <LauncherIcon />
        </Group>
        <GroupSep />

        <Group $w={259}>
          <GroupBody>
            <Row $h={44} $pad={8}>
              <SelectBox $w={127} $after={3}>
                <SelectText>Segoe UI Variable Text</SelectText>
                <Chevron />
              </SelectBox>
              <SelectBox $w={55}>
                <SelectText>9,5</SelectText>
                <Chevron />
              </SelectBox>
              <Slot $w={31}><GrowA up /></Slot>
              <Slot $w={29}><GrowA up={false} /></Slot>
            </Row>
            <Row $h={26} $pad={8}>
              <Slot $w={26}><LetterIcon $b>B</LetterIcon></Slot>
              <Slot $w={32}><LetterIcon $i>I</LetterIcon></Slot>
              <Slot $w={24}><LetterIcon $u>U</LetterIcon></Slot>
              <Slot $w={18}><Chevron /></Slot>
              <Slot $w={6}><VSep $h={24} /></Slot>
              <Slot $w={24}><BordersIcon /></Slot>
              <Slot $w={20}><Chevron /></Slot>
              <Slot $w={4}><VSep $h={24} /></Slot>
              <Slot $w={28}><FillIcon /></Slot>
              <Slot $w={12}><Chevron /></Slot>
              <Slot $w={38}><FontColorIcon /></Slot>
              <Slot $w={4}><Chevron /></Slot>
            </Row>
          </GroupBody>
          <GroupLabel $inset={18}>Font</GroupLabel>
          <LauncherIcon />
        </Group>
        <GroupSep />

        <Group $w={156}>
          <GroupBody $pad={9}>
            <Row>
              <Slot $w={25}><LinesIcon rows={TOP} /></Slot>
              <Slot $w={33}><ToggledBox><LinesIcon rows={MID} /></ToggledBox></Slot>
              <Slot $w={24}><LinesIcon rows={BOT} /></Slot>
              <Slot $w={34}><ToggledBox><WrapIcon /></ToggledBox></Slot>
            </Row>
            <Row>
              <Slot $w={25}><LinesIcon rows={LEFT} /></Slot>
              <Slot $w={33}><LinesIcon rows={CENTER} /></Slot>
              <Slot $w={24}><LinesIcon rows={RIGHT} /></Slot>
              <Slot $w={34}><MergeIcon /></Slot>
              <Slot $w={18}><Chevron /></Slot>
            </Row>
            <Row>
              <Slot $w={25}><IndentIcon /></Slot>
              <Slot $w={32}><IndentIcon flip /></Slot>
              <VSep $h={26} />
              <Slot $w={30}><OrientIcon /></Slot>
              <Slot $w={8}><Chevron /></Slot>
            </Row>
          </GroupBody>
          <GroupLabel $inset={18}>Alignment</GroupLabel>
          <LauncherIcon />
        </Group>
        <GroupSep />

        <Group $w={117}>
          <GroupBody $pad={9}>
            <Row>
              <SelectBox $w={99}>
                <SelectText>General</SelectText>
                <Chevron />
              </SelectBox>
            </Row>
            <Row>
              <Slot $w={24}><CurrencyIcon /></Slot>
              <Slot $w={18}><Chevron /></Slot>
              <Slot $w={32}><PercentText>%</PercentText></Slot>
              <Slot $w={24}><CommaIcon /></Slot>
            </Row>
            <Row>
              <Slot $w={24}><DecimalIcon /></Slot>
              <Slot $w={34}><DecimalIcon more /></Slot>
            </Row>
          </GroupBody>
          <GroupLabel $inset={18}>Number</GroupLabel>
          <LauncherIcon />
        </Group>
        <GroupSep />

        <Group $w={201}>
          <GroupBody $pad={13}>
            <Row><CondIcon /><StyleLabel $gap={4} $w={140}>Conditional Formatting</StyleLabel><Chevron size={8} /></Row>
            <Row><TableIcon /><StyleLabel $gap={4} $w={96}>Format as Table</StyleLabel><Chevron size={8} /></Row>
            <Row><CellStyleIcon /><StyleLabel $gap={4} $w={63}>Cell Styles</StyleLabel><Chevron size={8} /></Row>
          </GroupBody>
          <GroupLabel>Styles</GroupLabel>
        </Group>
        <GroupSep />

        <Group $w={118}>
          <GroupBody $pad={13}>
            <Row><InsertIcon /><StyleLabel $w={48}>Insert</StyleLabel><Slot $w={12}><Chevron /></Slot></Row>
            <Row><DeleteIcon /><StyleLabel $w={54}>Delete</StyleLabel><Slot $w={12}><Chevron /></Slot></Row>
            <Row><FormatIcon /><StyleLabel $w={43}>Format</StyleLabel><Slot $w={12}><Chevron size={8} /></Slot></Row>
          </GroupBody>
          <GroupLabel>Cells</GroupLabel>
        </Group>
        <GroupSep />

        <Group $w={116}>
          <GroupBody $pad={9}>
            <Row>
              <Slot $w={25}><SigmaIcon /></Slot>
              <Slot $w={28}><Chevron /></Slot>
              <Slot $w={30}><SortIcon /></Slot>
              <Slot $w={6}><Chevron /></Slot>
            </Row>
            <Row>
              <Slot $w={25}><FillDownIcon /></Slot>
              <Slot $w={12}><Chevron /></Slot>
              <Slot $w={16} />
              <Slot $w={30}><SearchIcon /></Slot>
              <Slot $w={6}><Chevron /></Slot>
            </Row>
            <Row>
              <Slot $w={25}><EraserIcon /></Slot>
              <Slot $w={12}><Chevron /></Slot>
            </Row>
          </GroupBody>
          <GroupLabel>Editing</GroupLabel>
        </Group>
        <GroupSep />

        <Group $w={67}>
          <GroupBody>
            <BigButton>
              <AddInsIcon />
              <BigCaption>Add-ins</BigCaption>
            </BigButton>
          </GroupBody>
          <GroupLabel>Add-ins</GroupLabel>
        </Group>
        <GroupSep />

        <Group $w={67}>
          <GroupBody>
            <BigButton>
              <AnalyzeIcon />
              <BigCaption>{"Analyze\nData"}</BigCaption>
            </BigButton>
          </GroupBody>
        </Group>
        <GroupSep />
        <RibbonEnd>
          <Chevron size={11} color="#d0d0d0" />
        </RibbonEnd>
      </Ribbon>

      <FormulaBar>
        <FormulaBox $w={111}>
          <NameText>E5</NameText>
          <Slot $w={20}><Chevron size={11} /></Slot>
        </FormulaBox>
        <DotsGap><Dots /></DotsGap>
        <FormulaBox $w={93} $after={4}>
          <Slot $w={28}><BigX /></Slot>
          <Slot $w={24}><BigCheck /></Slot>
          <FxSlot $w={30}>fx</FxSlot>
          <Slot $w={8}><Chevron size={10} /></Slot>
        </FormulaBox>
        <FormulaBox>
          <FormulaText>***</FormulaText>
          <Slot $w={20}><Chevron size={11} /></Slot>
        </FormulaBox>
      </FormulaBar>

      <SheetArea>
        <SheetGrid>
          <Corner />
          {heads.map((head, i) => (
            <ColHead key={i} $sel={head === "E"}>{head}</ColHead>
          ))}

          <RowHead>1</RowHead>
          {headerCells.map((cell, i) => (
            <Cell
              key={i}
              $head
              $bold
              $align="center"
              $h={dark}
              $v={i > 8 ? "#a8a8a8" : undefined}
              $bg={cell.dark ? DARK : undefined}
            >
              <HeadText>{cell.t}</HeadText>
              {cell.filter && <FilterButton />}
            </Cell>
          ))}

          {sheet.map((cells, r) => (
            <React.Fragment key={r}>
              <RowHead $sel={r + 2 === 5}>{r + 2}</RowHead>
              {cells.map(({ t, sel, ...rest }, c) => {
                const text = t === "***" ? <Stars>{t}</Stars> : t;
                return sel ? (
                  <EditedCell key={c} {...rest}>
                    {text}
                    <Selection />
                    <SelectionHandle />
                  </EditedCell>
                ) : (
                  <Cell key={c} {...rest}>{text}</Cell>
                );
              })}
            </React.Fragment>
          ))}
          <RowHead>17</RowHead>
        </SheetGrid>
        <VScroll>
          <ArrowUp />
          <Thumb />
          <ArrowDown />
        </VScroll>
      </SheetArea>

      <BottomBar>
        <NavZone>
          <Slot $w={36}><SideChevron left /></Slot>
          <Slot $w={36}><SideChevron /></Slot>
        </NavZone>
        <SheetTab>
          Sheet1
          <TabUnderline />
        </SheetTab>
        <RightZone>
          <ThinBar />
          <Slot $w={105}><PlusIcon /></Slot>
          <Slot $w={476} />
          <Slot $w={20}><Dots /></Slot>
          <HTrack>
            <Slot $w={14}><Tri left /></Slot>
            <HThumb />
            <TrackEnd><Tri /></TrackEnd>
          </HTrack>
        </RightZone>
      </BottomBar>
    </Page>
  );
};

export default App;
